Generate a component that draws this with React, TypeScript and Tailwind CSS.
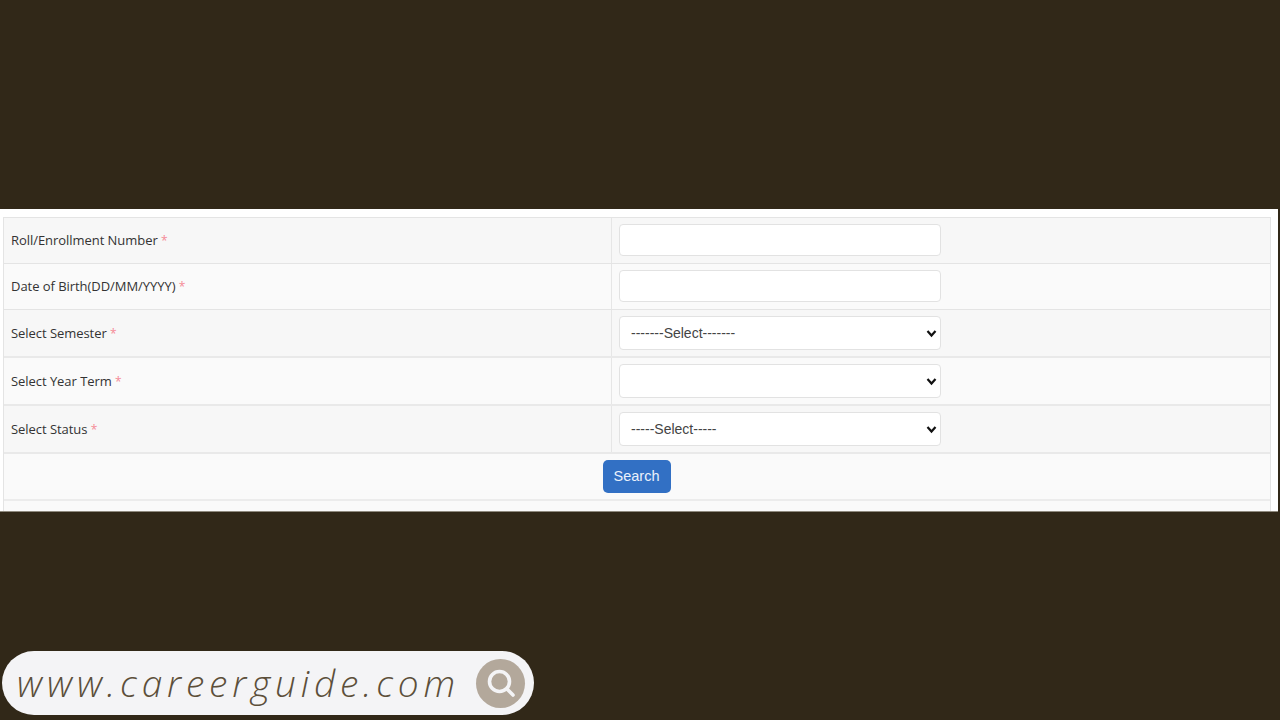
import React from "react";

function Req({ text, textRow }: { text: string; textRow?: boolean }) {
  return (
    <div className={`w-[608px] shrink-0 border-r border-[#e6e6e6] pl-[7px] text-[13px] tracking-[-0.05px] text-[#333] flex items-center font-['Open_Sans',sans-serif] ${textRow ? "" : "pt-[2px]"}`}>
      <span>
        {text} <span className="text-[#f58a96] text-[12px]">*</span>
      </span>
    </div>
  );
}

function TextRow({ label, h, shade }: { label: string; h: string; shade: string }) {
  return (
    <div className={`flex ${h} ${shade} border-b border-[#e4e4e4]`}>
      <Req text={label} textRow />
      <div className="flex items-center pl-[7px] pb-[1px]">
        <input className="w-[322px] h-[32px] bg-white border border-[#e2e2e2] rounded-[4px]" />
      </div>
    </div>
  );
}

function SelectRow({ label, option, shade }: { label: string; option: string; shade: string }) {
  return (
    <div className={`flex h-[48px] ${shade} border-b-2 border-[#e9e9e9]`}>
      <Req text={label} />
      <div className="flex items-center pl-[7px]">
        <div className="relative w-[322px] h-[34px] bg-white border border-[#e2e2e2] rounded-[4px] flex items-center pl-[11px] text-[14px] text-[#444] font-['Liberation_Sans',sans-serif]">
          {option}
          <svg className="absolute right-[3px] top-[12px]" width="11" height="9" viewBox="0 0 11 9" fill="none">
            <path d="M1.5 2 L5.5 6.5 L9.5 2" stroke="#111" strokeWidth="2.2" />
          </svg>
        </div>
      </div>
    </div>
  );
}

export default function App() {
  return (
    <div className="w-[1280px] h-[720px] bg-[#312818] overflow-hidden flex flex-col">
      <div className="h-[209px] shrink-0" />
      <div className="w-[1278px] h-[303px] shrink-0 bg-white pt-[8px] pl-[3px] overflow-hidden border-b border-[#8f8a7e]">
        <div className="w-[1268px] h-[294px] border-l border-r border-t border-[#e4e4e4]">
          <TextRow label="Roll/Enrollment Number" h="h-[46px]" shade="bg-[#f7f7f7]" />
          <TextRow label="Date of Birth(DD/MM/YYYY)" h="h-[46px]" shade="bg-[#fafafa]" />
          <SelectRow label="Select Semester" option="-------Select-------" shade="bg-[#f7f7f7]" />
          <SelectRow label="Select Year Term" option="" shade="bg-[#fafafa]" />
          <SelectRow label="Select Status" option="-----Select-----" shade="bg-[#f7f7f7]" />
          <div className="h-[47px] bg-[#fafafa] border-b-2 border-[#ececec] flex justify-center items-center pr-[1px]">
            <button className="w-[68px] h-[33px] bg-[#3270c4] rounded-[5px] text-[#eaf1fb] text-[14.5px] font-['Liberation_Sans',sans-serif]">
              Search
            </button>
          </div>
          <div className="h-[12px] bg-[#fafafa]" />
        </div>
      </div>
      <div className="h-[139px] shrink-0" />
      <div className="ml-[2px] w-[532px] h-[64px] shrink-0 rounded-full bg-[#f4f4f6] flex items-center justify-between pl-[15px] pr-[9px]">
        <span className="text-[37px] italic font-light tracking-[4.85px] text-[#5c4f3a] whitespace-nowrap font-['Open_Sans',sans-serif]">
          www.careerguide.com
        </span>
        <div className="w-[49px] h-[49px] rounded-full bg-[#b3a89b] flex items-center justify-center">
          <svg width="32" height="32" viewBox="0 0 32 32" fill="none" stroke="#f4f4f6" strokeWidth="3.6" strokeLinecap="round">
            <circle cx="14.5" cy="14.5" r="10" />
            <path d="M22 22 L28 28" />
          </svg>
        </div>
      </div>
    </div>
  );
}
